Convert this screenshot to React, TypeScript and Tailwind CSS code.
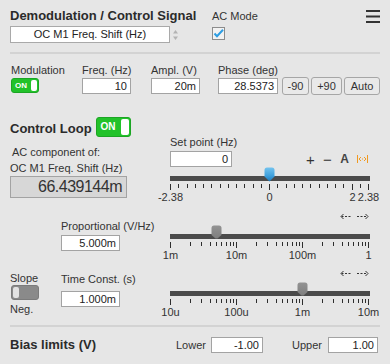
import React from "react";

type Tick = { x: number; major: boolean };
type Lbl = { x: number; t: string };

function Field({ w, v }: { w: string; v: string }) {
  return (
    <div
      className={`${w} h-[16px] bg-white border border-[#a3a3a3] text-right pr-[3px] leading-[14px] text-[11px] text-[#222]`}
    >
      {v}
    </div>
  );
}

function SmallToggle({ on }: { on: boolean }) {
  if (on) {
    return (
      <div className="w-[28px] h-[15px] rounded-[3px] bg-[#22c22a] border border-[#1ca524] flex items-center justify-between pl-[3px] pr-[1px]">
        <span className="text-[8px] font-bold text-white leading-none">ON</span>
        <span className="w-[6px] h-[11px] rounded-[2px] bg-white" />
      </div>
    );
  }
  return (
    <div className="w-[28px] h-[15px] rounded-[3px] bg-[#8a8a8a] border border-[#7b7b7b] flex items-center pl-[1px]">
      <span className="w-[6px] h-[11px] rounded-[2px] bg-[#e2e2e2]" />
    </div>
  );
}

function BigToggle() {
  return (
    <div className="w-[35px] h-[20px] rounded-[3px] bg-[#22c22a] border border-[#1ca524] flex items-center justify-between pl-[4px] pr-[1px]">
      <span className="text-[10px] font-bold text-white leading-none">ON</span>
      <span className="w-[8px] h-[16px] rounded-[2px] bg-white" />
    </div>
  );
}

function Thumb({ blue }: { blue: boolean }) {
  const id = blue ? "thumbBlue" : "thumbGray";
  return (
    <svg width="11" height="15" viewBox="0 0 11 15" className="block">
      <defs>
        <linearGradient id={id} x1="0" y1="0" x2="0" y2="1">
          {blue ? (
            <>
              <stop offset="0" stopColor="#74c4ef" />
              <stop offset="0.6" stopColor="#3d9fdc" />
              <stop offset="1" stopColor="#1f78b8" />
            </>
          ) : (
            <>
              <stop offset="0" stopColor="#939393" />
              <stop offset="1" stopColor="#7e7e7e" />
            </>
          )}
        </linearGradient>
      </defs>
      <path
        d={
          blue
            ? "M3 0.5 H8 Q10.5 0.5 10.5 3 V9.5 L5.5 14.5 L0.5 9.5 V3 Q0.5 0.5 3 0.5 Z"
            : "M3 0.5 H8 Q10.5 0.5 10.5 3 V10 L6.5 13.5 H4.5 L0.5 10 V3 Q0.5 0.5 3 0.5 Z"
        }
        fill={`url(#${id})`}
      />
    </svg>
  );
}

function Slider({
  pos,
  blue,
  ticks,
  labels,
}: {
  pos: number;
  blue: boolean;
  ticks: Tick[];
  labels: Lbl[];
}) {
  return (
    <div className="relative w-[200px] h-[37px] flex flex-col">
      <div className="mt-[9px] h-[5px] bg-[#4b4b4b]" />
      <svg className="block mt-[3px]" width="200" height="7" shapeRendering="crispEdges">
        {ticks.map((t, i) => (
          <line key={i} x1={t.x} x2={t.x} y1={0} y2={t.major ? 6 : 4} stroke="#2e2e2e" strokeWidth={1} />
        ))}
      </svg>
      <div className="relative h-[13px]">
        {labels.map((l, i) => (
          <span
            key={i}
            className="absolute top-0 -translate-x-1/2 whitespace-nowrap text-[11px] leading-[13px] text-[#333]"
            style={{ left: l.x }}
          >
            {l.t}
          </span>
        ))}
      </div>
      <div className="absolute top-0" style={{ left: pos - 5.5 }}>
        <Thumb blue={blue} />
      </div>
    </div>
  );
}

const linTicks: Tick[] = Array.from({ length: 25 }, (_, i) => ({
  x: Math.round((i * 198) / 24) + 0.5,
  major: i === 0 || i === 12 || i === 22 || i === 24,
}));

function logTicks(): Tick[] {
  const out: Tick[] = [];
  for (let d = 0; d < 3; d++) {
    out.push({ x: Math.round((198 * d) / 3) + 0.5, major: true });
    for (let k = 2; k <= 9; k++) {
      out.push({ x: Math.round((198 * (d + Math.log10(k))) / 3) + 0.5, major: false });
    }
  }
  out.push({ x: 198.5, major: true });
  return out;
}
const lTicks = logTicks();
const logPos = (decades: number) => Math.round((198 * decades) / 3) + 0.5;

function Arrows() {
  return (
    <svg width="29" height="7" viewBox="0 0 29 7" className="block">
      <path d="M3.5 1 L1 3.5 L3.5 6" fill="none" stroke="#333" strokeWidth="1" />
      <line x1="1.5" y1="3.5" x2="11" y2="3.5" stroke="#333" strokeWidth="1" strokeDasharray="2 1.5" />
      <line x1="17" y1="3.5" x2="27" y2="3.5" stroke="#333" strokeWidth="1" strokeDasharray="2 1.5" />
      <path d="M25.5 1 L28 3.5 L25.5 6" fill="none" stroke="#333" strokeWidth="1" />
    </svg>
  );
}

function FitIcon() {
  return (
    <svg width="11" height="8" viewBox="0 0 11 8" className="block">
      <line x1="0.5" y1="0" x2="0.5" y2="8" stroke="#f09a22" strokeWidth="1" />
      <line x1="10.5" y1="0" x2="10.5" y2="8" stroke="#f09a22" strokeWidth="1" />
      <path d="M4 2 L2 4 L4 6" fill="none" stroke="#f09a22" strokeWidth="1" />
      <path d="M7 2 L9 4 L7 6" fill="none" stroke="#f09a22" strokeWidth="1" />
      <line x1="5" y1="4" x2="6" y2="4" stroke="#f09a22" strokeWidth="1" />
    </svg>
  );
}

export default function App() {
  return (
    <div className="w-[390px] h-[364px] overflow-hidden bg-[#e6e6e6] text-[#333] font-['Liberation_Sans',Arial,sans-serif] text-[11px] leading-[13px] px-[10px]">
      {/* Header */}
      <div className="flex pt-[8px] h-[52px]">
        <div className="w-[202px]">
          <div className="text-[13px] font-bold leading-[16px] text-[#2b2b2b] whitespace-nowrap">
            Demodulation / Control Signal
          </div>
          <div className="flex items-center mt-[2px]">
            <div className="w-[160px] h-[17px] bg-white border border-[#a9a9a9] text-center leading-[15px] text-[#222]">
              OC M1 Freq. Shift (Hz)
            </div>
            <svg width="7" height="14" viewBox="0 0 7 14" className="ml-[2px]">
              <path d="M1 5.5 L3.5 2 L6 5.5 Z" fill="#b3b3b3" />
              <path d="M1 8.5 L3.5 12 L6 8.5 Z" fill="#b3b3b3" />
            </svg>
          </div>
        </div>
        <div className="flex flex-col pt-[2px]">
          <span>AC Mode</span>
          <svg width="13" height="13" viewBox="0 0 13 13" className="mt-[4px]">
            <rect x="0.5" y="0.5" width="12" height="12" fill="#f2f2f2" stroke="#8c8c8c" />
            <path d="M2.5 6.5 L5 9.2 L11 2.8" fill="none" stroke="#2d9de2" strokeWidth="2" />
          </svg>
        </div>
        <div className="ml-auto pt-[2px]">
          <svg width="14" height="13" viewBox="0 0 14 13" className="block">
            <rect x="0" y="0" width="14" height="2" fill="#333" />
            <rect x="0" y="5.5" width="14" height="2" fill="#333" />
            <rect x="0" y="11" width="14" height="2" fill="#333" />
          </svg>
        </div>
      </div>
      <div className="h-[2px] bg-[#d3d3d3]" />

      {/* Modulation row */}
      <div className="flex mt-[10px]">
        <div className="w-[72px] pl-[1px] flex flex-col">
          <span>Modulation</span>
          <div className="mt-[1px]">
            <SmallToggle on />
          </div>
        </div>
        <div className="w-[69px] flex flex-col">
          <span>Freq. (Hz)</span>
          <div className="mt-[1px]">
            <Field w="w-[49px]" v="10" />
          </div>
        </div>
        <div className="w-[67px] flex flex-col">
          <span>Ampl. (V)</span>
          <div className="mt-[1px]">
            <Field w="w-[49px]" v="20m" />
          </div>
        </div>
        <div className="flex flex-col">
          <span>Phase (deg)</span>
          <div className="flex items-center">
            <Field w="w-[60px]" v="28.5373" />
            <div className="ml-[4px] w-[27px] h-[18px] border border-[#a6a6a6] rounded-[3px] bg-[#e9e9e9] text-center leading-[16px]">
              -90
            </div>
            <div className="ml-[2px] w-[31px] h-[18px] border border-[#a6a6a6] rounded-[3px] bg-[#e9e9e9] text-center leading-[16px]">
              +90
            </div>
            <div className="ml-[2px] w-[36px] h-[18px] border border-[#a6a6a6] rounded-[3px] bg-[#e9e9e9] text-center leading-[16px]">
              Auto
            </div>
          </div>
        </div>
      </div>

      {/* Control loop row A */}
      <div className="flex mt-[22px]">
        <div className="w-[160px] flex flex-col">
          <div className="flex items-end h-[20px]">
            <span className="text-[13px] font-bold leading-[16px] text-[#2b2b2b]">Control Loop</span>
            <div className="ml-[4px]">
              <BigToggle />
            </div>
          </div>
          <span className="mt-[9px] pl-[2px]">AC component of:</span>
          <span className="mt-[3px]">OC M1 Freq. Shift (Hz)</span>
          <div className="mt-[1px] w-[117px] h-[22px] bg-[#d7d7d7] border border-[#a3a3a3] text-right pr-[4px] text-[16px] tracking-[-0.5px] leading-[20px] text-[#333]">
            66.439144m
          </div>
        </div>
        <div className="w-[210px] pt-[19px] flex flex-col">
          <span>Set point (Hz)</span>
          <div className="flex items-center mt-[2px] h-[16px]">
            <Field w="w-[62px]" v="0" />
            <div className="ml-auto pr-[12px] flex items-center gap-[8px] text-[#333]">
              <span className="w-[9px] text-center text-[15px] leading-[15px]">+</span>
              <span className="w-[9px] text-center text-[15px] leading-[15px]">−</span>
              <span className="w-[9px] text-center text-[12px] font-bold leading-[15px] text-[#444]">A</span>
              <FitIcon />
            </div>
          </div>
          <Slider
            pos={99.5}
            blue
            ticks={linTicks}
            labels={[
              { x: 0.5, t: "-2.38" },
              { x: 99.5, t: "0" },
              { x: 182.5, t: "2" },
              { x: 198.5, t: "2.38" },
            ]}
          />
        </div>
      </div>

      {/* Row B: proportional */}
      <div className="flex mt-[8px]">
        <div className="w-[160px] pl-[51px] pt-[8px] flex flex-col">
          <span>Proportional (V/Hz)</span>
          <div className="mt-[2px]">
            <Field w="w-[59px]" v="5.000m" />
          </div>
        </div>
        <div className="w-[210px] flex flex-col">
          <div className="h-[8px] flex items-center justify-end pr-[11px]">
            <Arrows />
          </div>
          <div className="mt-[5px]">
            <Slider
              pos={logPos(Math.log10(5))}
              blue={false}
              ticks={lTicks}
              labels={[
                { x: 0.5, t: "1m" },
                { x: 66.5, t: "10m" },
                { x: 132.5, t: "100m" },
                { x: 198.5, t: "1" },
              ]}
            />
          </div>
        </div>
      </div>

      {/* Row C: slope / time const */}
      <div className="flex mt-[7px]">
        <div className="w-[51px] pt-[3px] flex flex-col">
          <span>Slope</span>
          <div className="ml-[1px]">
            <SmallToggle on={false} />
          </div>
          <span className="mt-[3px]">Neg.</span>
        </div>
        <div className="w-[109px] pt-[4px] flex flex-col">
          <span>Time Const. (s)</span>
          <div className="mt-[5px]">
            <Field w="w-[59px]" v="1.000m" />
          </div>
        </div>
        <div className="w-[210px] flex flex-col">
          <div className="h-[8px] flex items-center justify-end pr-[11px]">
            <Arrows />
          </div>
          <div className="mt-[5px]">
            <Slider
              pos={logPos(2)}
              blue={false}
              ticks={lTicks}
              labels={[
                { x: 0.5, t: "10u" },
                { x: 66.5, t: "100u" },
                { x: 132.5, t: "1m" },
                { x: 198.5, t: "10m" },
              ]}
            />
          </div>
        </div>
      </div>

      <div className="mt-[6px] h-[2px] bg-[#d3d3d3]" />

      {/* Bias limits */}
      <div className="flex items-center mt-[10px] h-[16px]">
        <span className="w-[166px] text-[13px] font-bold leading-[16px] text-[#2b2b2b]">Bias limits (V)</span>
        <span>Lower</span>
        <div className="ml-[5px]">
          <Field w="w-[52px]" v="-1.00" />
        </div>
        <span className="ml-[29px]">Upper</span>
        <div className="ml-[6px]">
          <Field w="w-[50px]" v="1.00" />
        </div>
      </div>
    </div>
  );
}
